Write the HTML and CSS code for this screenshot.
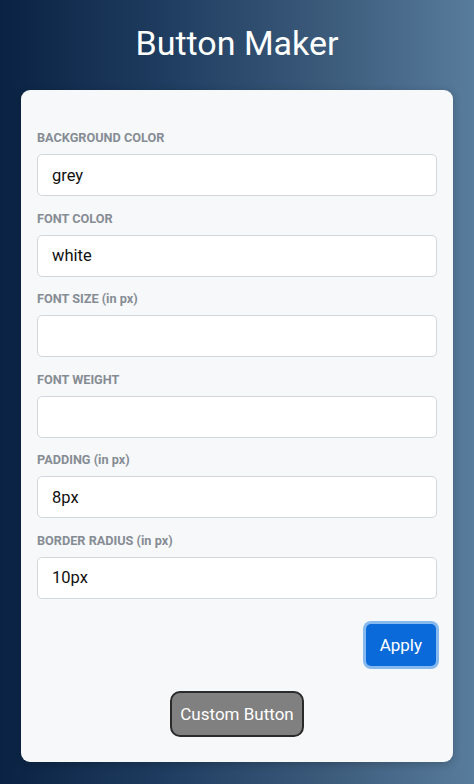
FILE: index.html
```html
<!DOCTYPE html>
<html>
<head>
<meta charset="utf-8">
<link rel="stylesheet" href="styles.css">
</head>
<body>
<h1 class="title">Button Maker</h1>
<div class="card">
  <div class="field">
    <label class="label">BACKGROUND COLOR</label>
    <input class="input" type="text" value="grey">
  </div>
  <div class="field">
    <label class="label">FONT COLOR</label>
    <input class="input" type="text" value="white">
  </div>
  <div class="field">
    <label class="label">FONT SIZE (in px)</label>
    <input class="input" type="text" value="">
  </div>
  <div class="field">
    <label class="label">FONT WEIGHT</label>
    <input class="input" type="text" value="">
  </div>
  <div class="field">
    <label class="label">PADDING (in px)</label>
    <input class="input" type="text" value="8px">
  </div>
  <div class="field">
    <label class="label">BORDER RADIUS (in px)</label>
    <input class="input" type="text" value="10px">
  </div>
  <div class="actions">
    <button class="apply">Apply</button>
  </div>
  <div class="preview">
    <button class="custom">Custom Button</button>
  </div>
</div>
</body>
</html>
```
FILE: styles.css
```css
html, body {
  margin: 0;
  padding: 0;
}
body {
  width: 474px;
  height: 784px;
  overflow: hidden;
  background: linear-gradient(90deg, #0a2243 0%, #1f3d60 35%, #3d5c7c 70%, #587c9c 100%);
  font-family: Roboto, "Liberation Sans", sans-serif;
}
.title {
  margin: 0;
  padding-top: 24px;
  height: 38px;
  line-height: 38px;
  font-size: 34px;
  font-weight: 400;
  color: #ffffff;
  text-align: center;
}
.card {
  margin: 28px 21px 0 21px;
  background: #f7f8fa;
  border-radius: 9px;
  padding: 40px 16px 25px 16px;
  box-shadow: 0 2px 8px rgba(0,0,0,0.2);
}
.field {
  display: flex;
  flex-direction: column;
  margin-bottom: 14.6px;
}
.field:nth-child(6) {
  margin-bottom: 0;
}
.label {
  font-size: 12.7px;
  line-height: 16px;
  font-weight: 700;
  color: #868c94;
  margin-bottom: 8px;
}
.input {
  box-sizing: border-box;
  height: 42px;
  width: 100%;
  border: 1.5px solid #d3d7dc;
  border-radius: 5px;
  background: #ffffff;
  padding: 0 14px;
  font-family: Roboto, "Liberation Sans", sans-serif;
  font-size: 16.5px;
  color: #111111;
  outline: none;
}
.actions {
  display: flex;
  justify-content: flex-end;
  margin-top: 25px;
  padding-right: 1px;
}
.apply {
  height: 42px;
  padding: 0 14px;
  border: none;
  border-radius: 5px;
  background: #0b6ad9;
  color: #ffffff;
  font-family: Roboto, "Liberation Sans", sans-serif;
  font-size: 17px;
  box-shadow: 0 0 0 3px #86b9ee;
}
.preview {
  display: flex;
  justify-content: center;
  margin-top: 25px;
}
.custom {
  background: grey;
  color: white;
  padding: 8px;
  border-radius: 10px;
  border: 2px solid #2a2a2a;
  font-family: Roboto, "Liberation Sans", sans-serif;
  font-size: 17px;
  line-height: 26px;
}
```
